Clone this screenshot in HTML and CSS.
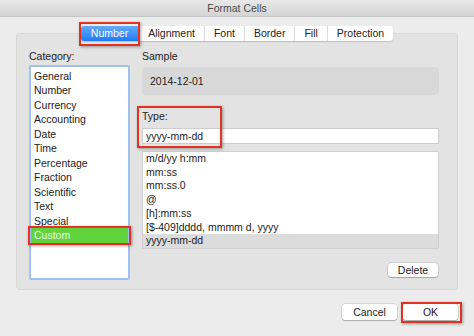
FILE: index.html
```html
<!DOCTYPE html>
<html lang="en">
    <head>
        <meta charset="UTF-8">
        <title>Format Cells</title>
        <link rel="stylesheet" href="styles.css">
    </head>
    <body>
        <div class="window">
            <div class="titlebar">Format Cells</div>
            <div class="tabs">
                <span class="tab active mark mark-tab">Number</span>
                <span class="tab">Alignment</span>
                <span class="tab">Font</span>
                <span class="tab">Border</span>
                <span class="tab">Fill</span>
                <span class="tab">Protection</span>
            </div>
            <div class="panel">
                <div class="col-left">
                    <div class="label">Category:</div>
                    <ul class="category-list">
                        <li>General</li>
                        <li>Number</li>
                        <li>Currency</li>
                        <li>Accounting</li>
                        <li>Date</li>
                        <li>Time</li>
                        <li>Percentage</li>
                        <li>Fraction</li>
                        <li>Scientific</li>
                        <li>Text</li>
                        <li>Special</li>
                        <li class="selected mark mark-row">Custom</li>
                    </ul>
                </div>
                <div class="col-right">
                    <div class="label">Sample</div>
                    <div class="sample">2014-12-01</div>
                    <div class="type-group">
                        <div class="label">Type:</div>
                        <div class="type-input">yyyy-mm-dd</div>
                        <div class="type-mark"></div>
                    </div>
                    <ul class="format-list">
                        <li>m/d/yy h:mm</li>
                        <li>mm:ss</li>
                        <li>mm:ss.0</li>
                        <li>@</li>
                        <li>[h]:mm:ss</li>
                        <li>[$-409]dddd, mmmm d, yyyy</li>
                        <li class="selected">yyyy-mm-dd</li>
                    </ul>
                    <div class="row-end">
                        <button class="btn btn-delete">Delete</button>
                    </div>
                </div>
            </div>
            <div class="footer">
                <button class="btn btn-dialog">Cancel</button>
                <button class="btn btn-dialog mark mark-ok">OK</button>
            </div>
        </div>
    </body>
</html>
```

FILE: styles.css
```css
body {
    margin: 0;
    background-color: #ececec;
    font-family: "Liberation Sans", Arial, sans-serif;
    font-size: 10.5px;
    color: #222;
}
.window {
    width: 474px;
    height: 336px;
    background-color: #ececec;
}
.titlebar {
    box-sizing: border-box;
    height: 17px;
    line-height: 17px;
    text-align: center;
    color: #4a4a4a;
    background: linear-gradient(#e8e8e8, #d4d4d4);
    border-bottom: 1px solid #c6c6c6;
}

/* tabs */
.tabs {
    display: flex;
    justify-content: center;
    margin-top: 9px;
    position: relative;
    z-index: 1;
}
.tab {
    height: 15px;
    line-height: 15px;
    padding: 0 9px;
    background-color: #fff;
    border-left: 1px solid #dcdcdc;
    box-shadow: 0 1px 1px rgba(0, 0, 0, 0.15);
}
.tab:first-child {
    border-left: none;
    border-radius: 3px 0 0 3px;
    padding: 0 10px;
}
.tab:last-child {
    border-radius: 0 3px 3px 0;
}
.tab.active {
    color: #fff;
    background: linear-gradient(#63abfb, #1c7cf6);
}

/* main panel */
.panel {
    box-sizing: border-box;
    height: 257px;
    margin: -8px 16px 0;
    padding: 16px 18px 0 12px;
    background-color: #e3e3e3;
    border: 1px solid #d8d8d8;
    border-radius: 4px;
    display: grid;
    grid-template-columns: 101px 1fr;
    column-gap: 12px;
    align-items: start;
}
.label {
    height: 13px;
    line-height: 13px;
}
ul {
    list-style: none;
    margin: 0;
    padding: 0;
}
.category-list {
    box-sizing: border-box;
    height: 215px;
    margin-top: 2px;
    padding-top: 1.5px;
    background-color: #fff;
    border: 2px solid #9fc3ec;
    border-radius: 2px;
}
.category-list li {
    line-height: 14.5px;
    padding-left: 3px;
}
.category-list li.selected {
    background-color: #5fd23c;
    color: #effde4;
}
.sample {
    height: 28px;
    line-height: 28px;
    margin-top: 4px;
    padding-left: 8px;
    background-color: #d8d8d8;
    border-radius: 4px;
}
.type-group {
    position: relative;
    margin-top: 15px;
}
.type-input {
    box-sizing: border-box;
    height: 16px;
    line-height: 14px;
    margin-top: 5px;
    padding-left: 3px;
    background-color: #fff;
    border: 1px solid #cdcdcd;
}
.format-list {
    box-sizing: border-box;
    height: 98px;
    margin-top: 7px;
    overflow: hidden;
    background-color: #fff;
    border: 1px solid #cfcfcf;
    display: flex;
    flex-direction: column;
    justify-content: flex-end;
}
.format-list li {
    flex-shrink: 0;
    line-height: 13.7px;
    padding-left: 3px;
}
.format-list li.selected {
    background-color: #dcdcdc;
}
.row-end {
    display: flex;
    justify-content: flex-end;
    margin-top: 14px;
    padding-right: 1px;
}

/* buttons */
.btn {
    font-family: inherit;
    font-size: 10.5px;
    color: #222;
    padding: 0;
    background-color: #fff;
    border: none;
    border-radius: 3px;
    box-shadow: 0 0 0 0.5px rgba(0, 0, 0, 0.18), 0 1px 1px rgba(0, 0, 0, 0.2);
}
.btn-delete {
    width: 50px;
    height: 14px;
}
.btn-dialog {
    width: 55px;
    height: 16px;
}
.footer {
    display: flex;
    justify-content: flex-end;
    gap: 6px;
    margin-top: 14px;
    padding-right: 16px;
}

/* red annotation boxes */
.mark {
    position: relative;
}
.mark::after,
.type-mark {
    content: "";
    position: absolute;
    border: 2.5px solid #e3321f;
    box-shadow: 1px 1px 3px rgba(0, 0, 0, 0.35);
    pointer-events: none;
}
.mark-tab::after {
    top: -4px;
    bottom: -5px;
    left: -2px;
    right: -2px;
}
.mark-row::after {
    top: -2px;
    bottom: -2px;
    left: -3px;
    right: -3px;
}
.mark-ok::after {
    top: -2px;
    bottom: -3px;
    left: -2px;
    right: -4px;
}
.type-mark {
    top: -4px;
    left: -5px;
    width: 81px;
    height: 38px;
}
```
